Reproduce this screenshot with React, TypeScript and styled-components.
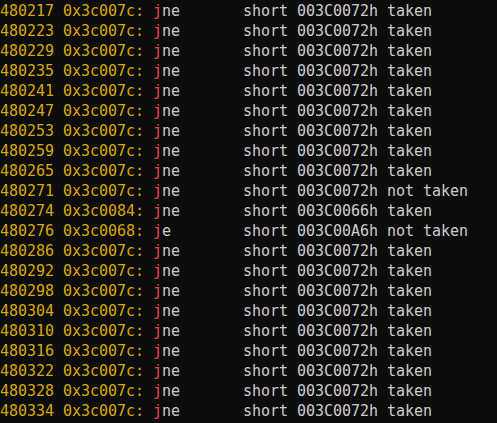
import React from "react";
import styled, { createGlobalStyle } from "styled-components";

const Global = createGlobalStyle`
  html, body { margin: 0; padding: 0; background: #0c0c0c; }
  body { width: 497px; height: 423px; overflow: hidden; }
`;

const Console = styled.div`
  box-sizing: border-box;
  width: 497px;
  height: 423px;
  padding: 1px 0 0 0;
  background: #0c0c0c;
  color: #cccccc;
  font-family: "DejaVu Sans Mono", "Liberation Mono", monospace;
  font-size: 15px;
  letter-spacing: -0.03px;
  line-height: 20px;
  white-space: pre;
`;

const Row = styled.div`
  display: block;
  height: 20px;
`;

const Yellow = styled.span`
  color: #d8a900;
`;

const Red = styled.span`
  color: #e74856;
`;

type Entry = { n: string; addr: string; op: string; target: string; result: string };

const T = "003C0072h";
const A = "0x3c007c";
const rows: Entry[] = [
  ...["480217", "480223", "480229", "480235", "480241", "480247", "480253", "480259", "480265"].map(
    (n) => ({ n, addr: A, op: "jne", target: T, result: "taken" })
  ),
  { n: "480271", addr: A, op: "jne", target: T, result: "not taken" },
  { n: "480274", addr: "0x3c0084", op: "jne", target: "003C0066h", result: "taken" },
  { n: "480276", addr: "0x3c0068", op: "je", target: "003C00A6h", result: "not taken" },
  ...["480286", "480292", "480298", "480304", "480310", "480316", "480322", "480328", "480334"].map(
    (n) => ({ n, addr: A, op: "jne", target: T, result: "taken" })
  ),
];

export default function App() {
  return (
    <>
      <Global />
      <Console>
        {rows.map((r) => (
          <Row key={r.n}>
            <Yellow>{`${r.n} ${r.addr}:`}</Yellow>
            {" "}
            <Red>{r.op[0]}</Red>
            {r.op.slice(1).padEnd(9, " ")}
            {`short ${r.target} ${r.result}`}
          </Row>
        ))}
      </Console>
    </>
  );
}
